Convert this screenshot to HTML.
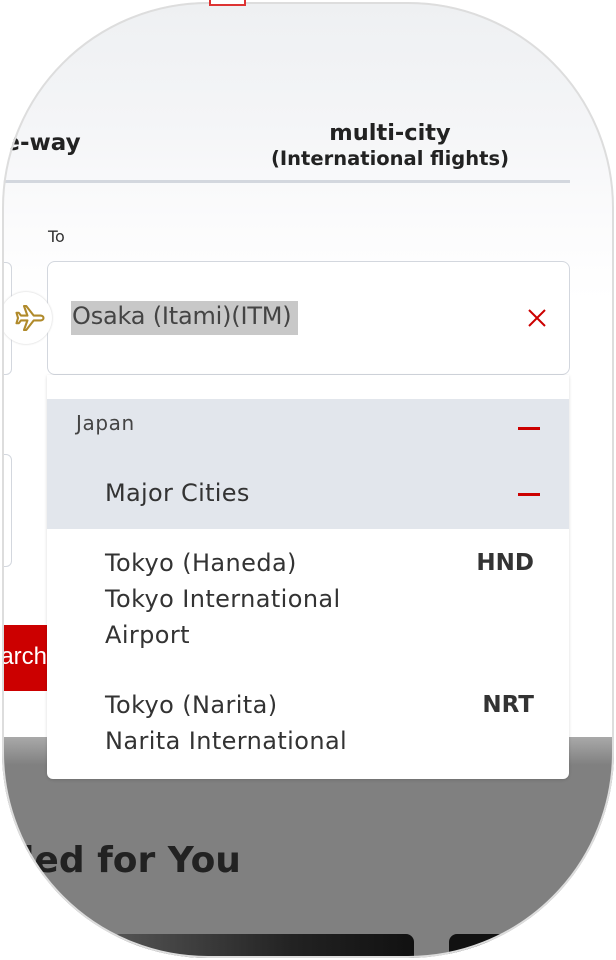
<!DOCTYPE html>
<html><head><meta charset="utf-8"><style>
*{margin:0;padding:0;box-sizing:border-box}
body{width:616px;height:960px;background:#fff;position:relative;overflow:hidden;font-family:"Liberation Sans","DejaVu Sans",sans-serif}
.frame{position:absolute;left:0;top:0;width:616px;height:960px;border-radius:208px;overflow:hidden;background:linear-gradient(#eef0f2 0,#f4f5f7 120px,#fbfbfc 220px,#fff 300px)}
.ring{position:absolute;left:2px;top:2px;width:612px;height:956px;border-radius:206px;border:2px solid #ddd;box-shadow:0 0 0 6px #fff}
.abs{position:absolute}
.gray{left:0;top:737px;width:616px;height:230px;background:linear-gradient(#a9a9a9 0,#808080 28px,#808080)}
.dv{font-family:'DejaVu Sans',sans-serif}
</style></head><body>
<div class="frame">
 <div class="abs gray"></div>
 <div class="abs dv" style="left:-12px;top:130px;font-size:23px;font-weight:bold;color:#222">ne-way</div>
 <div class="abs dv" style="left:240px;top:120px;width:300px;text-align:center;font-weight:bold;color:#222;line-height:26px"><div style="font-size:22.5px">multi-city</div><div style="font-size:19.5px">(International flights)</div></div>
 <div class="abs" style="left:0;top:180px;width:570px;height:3px;background:#d3d7de"></div>
 <div class="abs dv" style="left:48px;top:227px;font-size:16px;color:#333">To</div>
 <div class="abs" style="left:-10px;top:262px;width:22px;height:113px;border:1px solid #d3d7de;border-radius:6px;background:#fff"></div>
 <div class="abs" style="left:-10px;top:454px;width:22px;height:113px;border:1px solid #d3d7de;border-radius:6px;background:#fff"></div>
 <div class="abs" style="left:47px;top:261px;width:523px;height:114px;border:1px solid #d3d7de;border-radius:8px;background:#fff"></div>
 <div class="abs" style="left:0;top:292px;width:52px;height:52px;border-radius:50%;background:#fff;box-shadow:0 0 2px #ccc"></div>
 <svg class="abs" style="left:12px;top:300px" width="36" height="36" viewBox="0 0 24 24"><path d="M21 12c0-1-1-1.6-2-1.6h-4.5L9.5 4H8l2.3 6.4H6L4.5 8.5H3l1 3.5-1 3.5h1.5L6 13.6h4.3L8 20h1.5l5-6.4H19c1 0 2-.6 2-1.6z" fill="none" stroke="#b08a2a" stroke-width="1.4" stroke-linejoin="round"/></svg>
 <div class="abs" style="left:71px;top:301px;height:34px;width:227px;background:#c8c8c8"></div>
 <div class="abs dv" style="left:72px;top:302px;font-size:24px;color:#444;letter-spacing:-0.2px;white-space:nowrap">Osaka (Itami)(ITM)</div>
 <svg class="abs" style="left:527px;top:308px" width="20" height="20" viewBox="0 0 20 20"><path d="M2 2L18 18M18 2L2 18" stroke="#c00" stroke-width="2"/></svg>
 <div class="abs" style="left:0;top:625px;width:47px;height:66px;background:#c00;color:#fff;font-size:24px;line-height:64px;text-align:right;overflow:hidden;white-space:nowrap;direction:rtl">arch</div>
 <div class="abs dv" style="left:47px;top:375px;width:522px;height:404px;background:#fff;border-radius:0 0 6px 6px;box-shadow:0 1px 3px rgba(0,0,0,.15);color:#333">
  <div style="margin-top:24px;height:130px;background:#e2e6ec;position:relative">
   <div class="abs" style="left:29px;top:12px;font-size:20px;color:#444;letter-spacing:0.6px">Japan</div>
   <div class="abs" style="left:471px;top:28px;width:22px;height:3px;background:#c00"></div>
   <div class="abs" style="left:58px;top:80px;font-size:24px;color:#333;letter-spacing:0.3px">Major Cities</div>
   <div class="abs" style="left:471px;top:94px;width:22px;height:3px;background:#c00"></div>
  </div>
  <div class="abs" style="left:58px;top:170px;font-size:24px;line-height:36px;color:#333;letter-spacing:0.4px;white-space:nowrap">Tokyo (Haneda)<br>Tokyo International<br>Airport</div>
  <div class="abs" style="right:35px;top:170px;font-size:23px;line-height:36px;font-weight:bold;color:#333">HND</div>
  <div class="abs" style="left:58px;top:312px;font-size:24px;line-height:36px;color:#333;letter-spacing:0.4px;white-space:nowrap">Tokyo (Narita)<br>Narita International</div>
  <div class="abs" style="right:35px;top:312px;font-size:23px;line-height:36px;font-weight:bold;color:#333">NRT</div>
 </div>
 <div class="abs dv" style="left:-17px;top:840px;font-size:36px;font-weight:bold;color:#222;white-space:nowrap">nded for You</div>
 <div class="abs" style="left:112px;top:934px;width:302px;height:40px;border-radius:8px;background:linear-gradient(90deg,#555,#222 60%,#111)"></div>
 <div class="abs" style="left:449px;top:934px;width:200px;height:40px;border-radius:8px;background:#111"></div>
</div>
<div class="ring"></div>
<div class="abs" style="left:209px;top:0;width:37px;height:6px;border:2px solid #d33;border-top:none;background:#fff"></div>
</body></html>
